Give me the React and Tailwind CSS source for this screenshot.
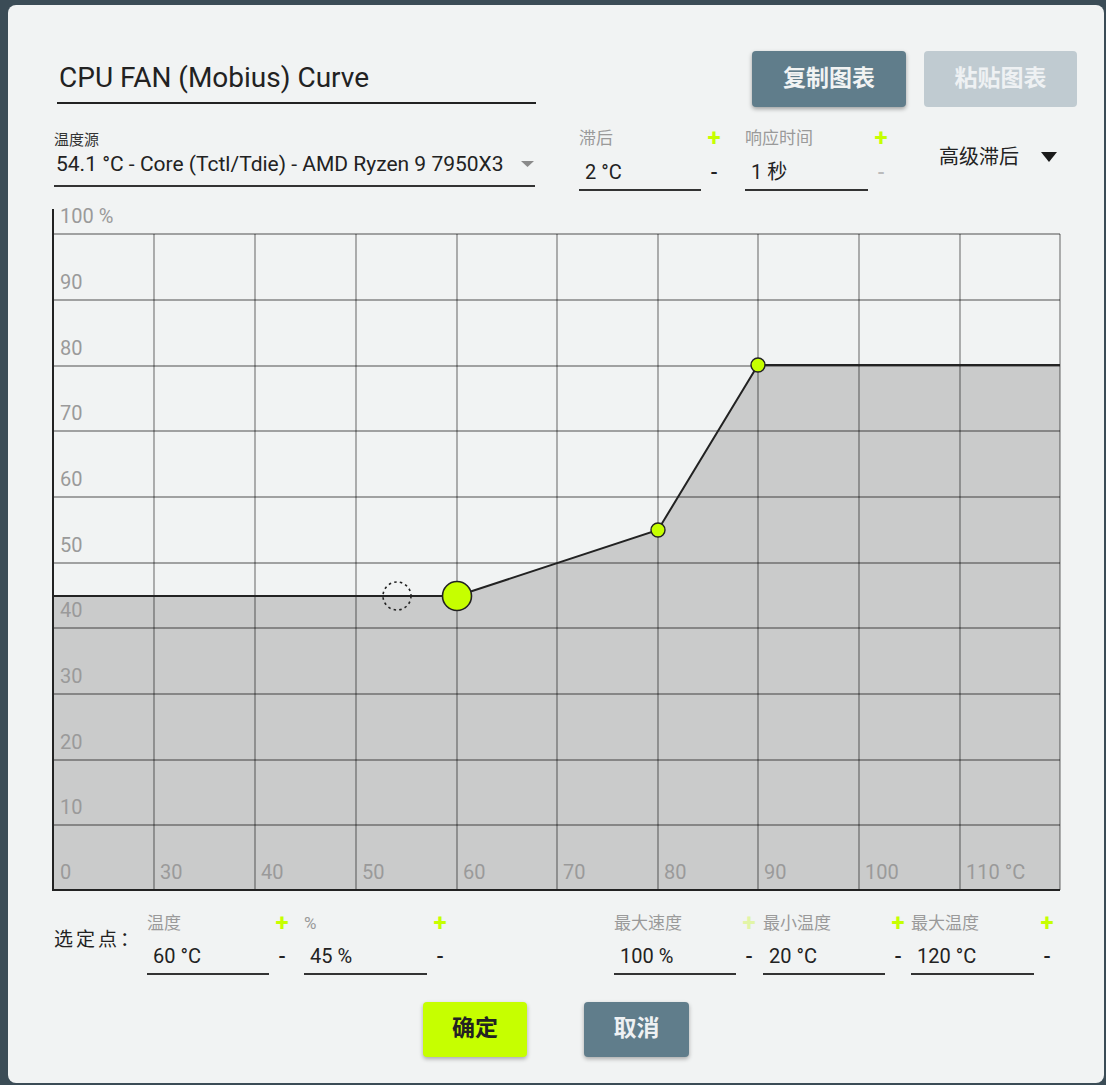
import React from "react";

const GRID_X = [53, 154, 255, 356, 457, 557, 658, 758, 859, 960, 1060];
const GRID_Y = [234, 300, 366, 431, 497, 563, 628, 694, 760, 825, 890];
const Y_LABELS = ["100 %", "90", "80", "70", "60", "50", "40", "30", "20", "10", "0"];
const X_LABELS = ["30", "40", "50", "60", "70", "80", "90", "100", "110 °C"];

function Chart() {
  const curve = "53,596 457,596 658,530 758,365 1060,365";
  return (
    <svg width="1020" height="690" className="block ml-[37px] mt-[14px]">
      <g transform="translate(-45,-205)">
        <polygon points={`${curve} 1060,890 53,890`} fill="#cacbcb" />
        {GRID_X.slice(1).map((x) => (
          <line key={"gx" + x} x1={x} y1={234} x2={x} y2={890} stroke="#000" strokeOpacity="0.45" strokeWidth="1.3" />
        ))}
        {GRID_Y.map((y) => (
          <line key={"gy" + y} x1={53} y1={y} x2={1060} y2={y} stroke="#000" strokeOpacity="0.45" strokeWidth="1.3" />
        ))}
        <line x1={53} y1={209} x2={53} y2={891} stroke="#222" strokeWidth="2" />
        <line x1={52} y1={890} x2={1060} y2={890} stroke="#222" strokeWidth="2" />
        <polyline points={curve} fill="none" stroke="#222" strokeWidth="2" />
        {Y_LABELS.map((t, i) => (
          <text key={"yl" + t} x={60} y={GRID_Y[i] - 11} fontSize="20" fill="#9a9a9a">
            {t}
          </text>
        ))}
        {X_LABELS.map((t, i) => (
          <text key={"xl" + t} x={GRID_X[i + 1] + 6} y={879} fontSize="20" fill="#9a9a9a">
            {t}
          </text>
        ))}
        <circle cx={397} cy={596} r={14} fill="none" stroke="#222" strokeWidth="1.6" strokeDasharray="2.5 3.2" />
        <circle cx={457} cy={596} r={14.5} fill="#c6ff00" stroke="#222" strokeWidth="1.6" />
        <circle cx={658} cy={530} r={7} fill="#c6ff00" stroke="#222" strokeWidth="1.4" />
        <circle cx={758} cy={365} r={7} fill="#c6ff00" stroke="#222" strokeWidth="1.4" />
      </g>
    </svg>
  );
}

function Field({ label, value, w, valueGap, plusFaded, minusFaded }) {
  return (
    <div className="flex">
      <div className={w}>
        <div className="text-[17px] leading-[18px] text-[#9a9a9a] whitespace-nowrap">{label}</div>
        <div className={`${valueGap} text-[20px] leading-[24px] text-[#222] pl-[6px] pb-[5px] border-b-2 border-[#333] whitespace-nowrap`}>
          {value}
        </div>
      </div>
      <div className="w-[26px] flex flex-col items-center">
        <div className={`text-[24px] font-bold leading-[18px] ${plusFaded ? "text-[#e2f5a6]" : "text-[#c6ff00]"}`}>+</div>
        <div className={`${valueGap} text-[21px] font-medium leading-[24px] ${minusFaded ? "text-[#bbbbbb]" : "text-[#222]"}`}>-</div>
      </div>
    </div>
  );
}

export default function App() {
  return (
    <div className="w-[1106px] h-[1085px] bg-[#3b4c56] pt-[5px] pl-[8px] overflow-hidden font-['Roboto','Noto_Sans_CJK_SC',sans-serif]">
      <div className="w-[1096px] h-[1078px] rounded-[8px] bg-[#f1f3f3] pt-[46px]">
        {/* header */}
        <div className="flex items-start">
          <div className="ml-[49px] w-[479px] h-[53px] flex items-center border-b-2 border-[#222] pl-[2px] pt-[3px] text-[28px] text-[#222] whitespace-nowrap">
            CPU FAN (Mobius) Curve
          </div>
          <div className="ml-[216px] flex gap-[18px]">
            <div className="w-[154px] h-[56px] rounded-[4px] bg-[#607d8b] shadow-[0_2px_4px_rgba(0,0,0,0.35)] flex items-center justify-center text-[23px] font-bold text-[#f1f3f3]">
              复制图表
            </div>
            <div className="w-[153px] h-[56px] rounded-[4px] bg-[#c0cbd1] flex items-center justify-center text-[23px] font-bold text-[#eef1f3]">
              粘贴图表
            </div>
          </div>
        </div>

        {/* source & hysteresis row */}
        <div className="flex items-start mt-[22px] ml-[46px] h-[62px]">
          <div className="w-[481px]">
            <div className="text-[15px] leading-[22px] text-[#333]">温度源</div>
            <div className="flex items-center justify-between pt-[1px] pb-[9px] pl-[2px] pr-[1px] border-b-2 border-[#333]">
              <span className="text-[21px] leading-[24px] text-[#222] whitespace-nowrap">
                54.1 °C - Core (Tctl/Tdie) - AMD Ryzen 9 7950X3
              </span>
              <svg width="13" height="6" viewBox="0 0 13 6">
                <polygon points="0,0 13,0 6.5,6" fill="#8a8a8a" />
              </svg>
            </div>
          </div>
          <div className="ml-[44px]">
            <Field label="滞后" value="2 °C" w="w-[122px]" valueGap="mt-[13px]" />
          </div>
          <div className="ml-[18px]">
            <Field label="响应时间" value="1 秒" w="w-[123px]" valueGap="mt-[13px]" minusFaded />
          </div>
          <div className="ml-[45px] mt-[16px] flex items-center">
            <span className="text-[20px] leading-[24px] text-[#222] whitespace-nowrap">高级滞后</span>
            <svg width="16" height="10" viewBox="0 0 16 10" className="ml-[22px]">
              <polygon points="0,0 16,0 8,10" fill="#1a1a1a" />
            </svg>
          </div>
        </div>

        <Chart />

        {/* selected point row */}
        <div className="flex items-start mt-[19px] h-[62px]">
          <div className="ml-[46px] w-[93px] mt-[14px] text-[19px] tracking-[3px] leading-[24px] text-[#222] whitespace-nowrap">
            选定点：
          </div>
          <Field label="温度" value="60 °C" w="w-[122px]" valueGap="mt-[12px]" />
          <div className="ml-[9px]">
            <Field label="%" value="45 %" w="w-[123px]" valueGap="mt-[12px]" />
          </div>
          <div className="ml-[161px]">
            <Field label="最大速度" value="100 %" w="w-[122px]" valueGap="mt-[12px]" plusFaded />
          </div>
          <div className="ml-[1px]">
            <Field label="最小温度" value="20 °C" w="w-[122px]" valueGap="mt-[12px]" />
          </div>
          <Field label="最大温度" value="120 °C" w="w-[123px]" valueGap="mt-[12px]" />
        </div>

        {/* buttons */}
        <div className="flex justify-center gap-[57px] mt-[26px]">
          <div className="w-[104px] h-[55px] rounded-[4px] bg-[#c6ff00] shadow-[0_2px_4px_rgba(0,0,0,0.3)] flex items-center justify-center text-[23px] font-bold text-[#222]">
            确定
          </div>
          <div className="w-[105px] h-[55px] rounded-[4px] bg-[#607d8b] shadow-[0_2px_4px_rgba(0,0,0,0.3)] flex items-center justify-center text-[23px] font-bold text-[#eef1f3]">
            取消
          </div>
        </div>
      </div>
    </div>
  );
}
